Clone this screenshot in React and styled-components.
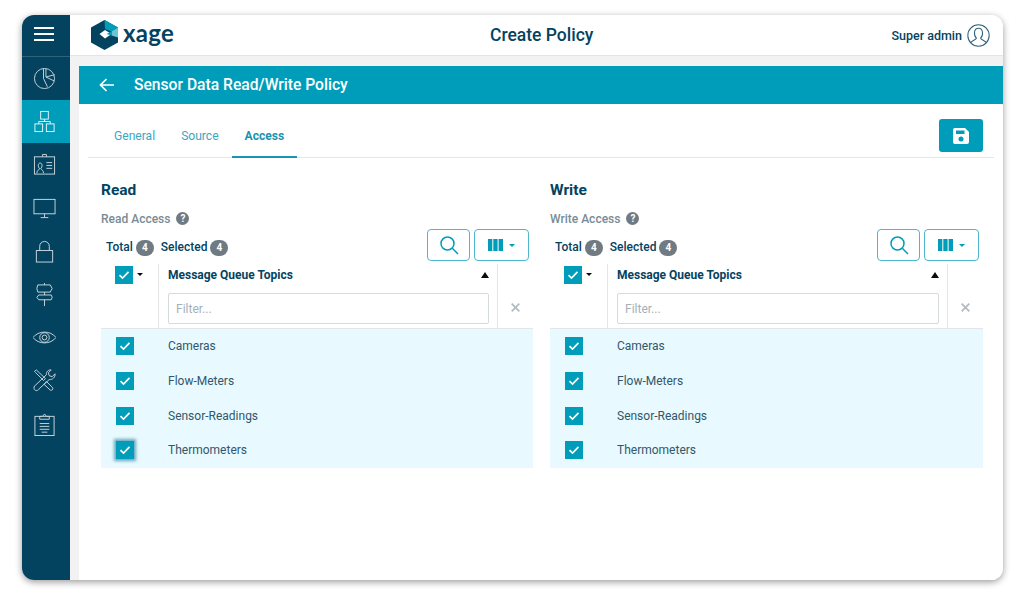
import * as React from "react";
import styled, { createGlobalStyle } from "styled-components";

const topics = ["Cameras", "Flow-Meters", "Sensor-Readings", "Thermometers"];

const NavIcons = [
  () => (
    <g>
      <circle cx="12" cy="12" r="10.500" />
      <path d="M11 1.600V12l4 8.600M13.500 2v8.500l9-2.500M13.500 10.500l8.500 4" />
    </g>
  ),
  () => (
    <g>
      <rect x="8" y="1.500" width="8" height="8" />
      <rect x="2" y="14.500" width="8" height="8" />
      <rect x="14" y="14.500" width="8" height="8" />
      <path d="M12 9.500v2.500M6 14.500V12h12v2.500" />
    </g>
  ),
  () => (
    <g>
      <rect x="1.500" y="4" width="21" height="18" />
      <path d="M10 4V1.500h4V4M14 10h6M14 13h6M14 16h6M4 21c.2-3 2-3.500 3-4.500-2-2-2-6 .5-6s2.500 4 .5 6c1 1 2.800 1.500 3 4.500" />
    </g>
  ),
  () => (
    <g>
      <rect x="1" y="2.500" width="22" height="15" />
      <path d="M12 17.500v3.500M8 21.500h8" />
    </g>
  ),
  () => (
    <g>
      <rect x="3.500" y="11" width="17" height="12" />
      <path d="M7 11V6.500a5 5 0 0 1 10 0V11" />
    </g>
  ),
  () => (
    <g>
      <path d="M12 0v2M12 9.500v3M12 17.500v6.500" />
      <path d="M5 2h13l2 3.700-2 3.800H5l-1-3.800zM19 12.500H6l-2 2.500 2 2.500h13l1-2.500z" />
    </g>
  ),
  () => (
    <g>
      <path d="M0 12c5.500-7.500 18.500-7.500 24 0-5.500 7.500-18.500 7.500-24 0z" />
      <circle cx="12" cy="12" r="5" />
      <circle cx="12" cy="12" r="2.500" />
    </g>
  ),
  () => (
    <g>
      <path d="M1.500 2.500 3.500 1 13 10l-2 2-8.500-8.500z" />
      <path d="M14 13l6.500 6.500c1 1.500-1 3.500-2.500 2.500L11.500 16z" />
      <path d="M23 5l-3 3-3-1-1-3 3-3c-3-.5-5.500 2-5 5L3 16.500c-2 1-2.500 3.500-1.500 5s4 1.500 5-1L17 11c3 .5 6.500-2.500 6-6z" />
    </g>
  ),
  () => (
    <g>
      <rect x="2" y="3.500" width="20" height="20" />
      <path d="M7 6.500V3.500h3L12 1l2 2.500h3v3zM7 11h10M7 14h10M7 17h10M9 20h6" />
    </g>
  ),
];

function HelpBadge() {
  return <HelpDot>?</HelpDot>;
}

function CheckBox({ focused }) {
  return (
    <CheckSquare $focused={focused}>
      <svg width="12" height="10" viewBox="0 0 12 10" fill="none">
        <path d="M1.500 5.200 4.500 8 10.500 1.800" stroke="#fff" strokeWidth="1.700" />
      </svg>
    </CheckSquare>
  );
}

function AccessPanel({ title, focusLast }) {
  return (
    <Panel>
      <PanelTitle>{title}</PanelTitle>
      <AccessLabel>
        {title} Access <HelpBadge />
      </AccessLabel>
      <CountBar>
        <Counts>
          Total <CountBadge>4</CountBadge>
          <CountGap>Selected</CountGap> <CountBadge>4</CountBadge>
        </Counts>
        <ToolButton $width={43}>
          <svg width="20" height="20" viewBox="0 0 20 20" fill="none" stroke="#009dbb" strokeWidth="1.500">
            <circle cx="8.500" cy="8.500" r="6.500" />
            <path d="M13.300 13.300 19 19" />
          </svg>
        </ToolButton>
        <ToolButton $width={55}>
          <svg width="15" height="12" viewBox="0 0 15 12" fill="#009dbb">
            <rect x="0" y="0" width="4.300" height="12" />
            <rect x="5.300" y="0" width="4.300" height="12" />
            <rect x="10.600" y="0" width="4.400" height="12" />
          </svg>
          <Caret $color="#009dbb" />
        </ToolButton>
      </CountBar>
      <TableHead>
        <CheckHead>
          <CheckBox />
          <Caret $color="#0b0b0b" />
        </CheckHead>
        <TopicHead>
          <TopicTitle>
            Message Queue Topics
            <SortArrow />
          </TopicTitle>
          <FilterInput placeholder="Filter..." readOnly />
        </TopicHead>
        <ClearHead>
          <svg width="9" height="9" viewBox="0 0 9 9" stroke="#b4bcc2" strokeWidth="1.800">
            <path d="M.7.700l7.600 7.600M8.300.7.700 8.300" />
          </svg>
        </ClearHead>
      </TableHead>
      <Rows>
        {topics.map((topic, index) => (
          <Row key={topic}>
            <RowCheck>
              <CheckBox focused={focusLast && index === topics.length - 1} />
            </RowCheck>
            <RowText>{topic}</RowText>
          </Row>
        ))}
      </Rows>
    </Panel>
  );
}

export default function App() {
  return (
    <Page>
      <GlobalStyle />
      <Frame>
        <Sidebar>
          <MenuCell>
            <svg width="20" height="14" viewBox="0 0 20 14" fill="#fff">
              <rect y="0" width="20" height="2" />
              <rect y="6" width="20" height="2" />
              <rect y="12" width="20" height="2" />
            </svg>
          </MenuCell>
          {NavIcons.map((Icon, index) => (
            <NavCell key={index} $active={index === 1}>
              <svg width="23" height="23" viewBox="0 0 24 24" fill="none" stroke={index === 1 ? "#e4f5f9" : "#c7d6de"} strokeWidth="1">
                <Icon />
              </svg>
            </NavCell>
          ))}
        </Sidebar>
        <Main>
          <TopBar>
            <Logo>
              <svg width="27" height="30" viewBox="0 0 27 30">
                <path d="M13.500 0 27 7.500V22.500L13.500 30 0 22.500V7.500z" fill="#04435f" />
                <path d="M13.500 0 27 7.500 20.500 11.500 14 9z" fill="#009dbb" />
                <path d="M20.500 11.500 27 7.500V17.500L20.500 15.500z" fill="#6cc4d6" />
                <path d="M14 10 20.500 14 14 18.500 8.500 14z" fill="#fff" />
                <path d="M20.500 11.500V15.500L15.500 14z" fill="#009dbb" />
              </svg>
              <LogoText>xage</LogoText>
            </Logo>
            <PageTitle>Create Policy</PageTitle>
            <User>
              Super admin
              <svg width="23" height="23" viewBox="0 0 22 22" fill="none" stroke="#2f6179" strokeWidth="1">
                <circle cx="11" cy="11" r="10.200" />
                <path d="M3.500 18c1-2.500 5-2.500 5.500-4.500-3-3-2.500-9.500 2-9.500s5 6.500 2 9.500c.5 2 4.500 2 5.500 4.500" />
              </svg>
            </User>
          </TopBar>
          <Content>
            <Banner>
              <svg width="16" height="14" viewBox="0 0 16 14" fill="none" stroke="#fff" strokeWidth="1.700">
                <path d="M15 7H1.500M7.500 1 1.500 7l6 6" />
              </svg>
              <BannerTitle>Sensor Data Read/Write Policy</BannerTitle>
            </Banner>
            <Card>
              <TabBar>
                <Tab>General</Tab>
                <Tab>Source</Tab>
                <Tab $active>Access</Tab>
                <SaveButton>
                  <svg width="16" height="16" viewBox="0 0 16 16">
                    <path fillRule="evenodd" fill="#fff" d="M2 0h10l4 4v10a2 2 0 0 1-2 2H2a2 2 0 0 1-2-2V2a2 2 0 0 1 2-2zM3 2.500V6h8.500V2.500zM8 8.500a2.500 2.500 0 1 0 0 5 2.500 2.500 0 0 0 0-5z" />
                  </svg>
                </SaveButton>
              </TabBar>
              <Panels>
                <AccessPanel title="Read" focusLast />
                <AccessPanel title="Write" />
              </Panels>
            </Card>
          </Content>
        </Main>
      </Frame>
    </Page>
  );
}

const GlobalStyle = createGlobalStyle`
  html, body {
    margin: 0;
    background: #fff;
    font-family: Roboto, "Liberation Sans", sans-serif;
  }
`;

const Page = styled.div`
  width: 1024px;
  height: 595px;
  padding: 15px 21px 15px 22px;
  box-sizing: border-box;
  overflow: hidden;
`;

const Frame = styled.div`
  height: 565px;
  display: flex;
  border-radius: 12px;
  overflow: hidden;
  background: #fff;
  box-shadow: 0 2px 7px rgba(0, 0, 0, 0.4);
`;

const Sidebar = styled.nav`
  width: 48px;
  flex: none;
  display: flex;
  flex-direction: column;
  background: #04435f;
`;

const MenuCell = styled.div`
  height: 42px;
  display: flex;
  align-items: center;
  justify-content: center;
  border-bottom: 1px solid #2f6179;
  padding: 0 4px 4px 0;
  box-sizing: border-box;
`;

const NavCell = styled.div`
  height: 43.200px;
  display: flex;
  align-items: center;
  justify-content: center;
  padding-right: 4px;
  background: ${(props) => (props.$active ? "#009dbb" : "transparent")};
`;

const Main = styled.div`
  flex: 1;
  min-width: 0;
  display: flex;
  flex-direction: column;
  background: #f2f2f2;
`;

const TopBar = styled.header`
  height: 41px;
  flex: none;
  display: flex;
  align-items: center;
  justify-content: space-between;
  position: relative;
  padding: 0 2px 0 21px;
  box-sizing: border-box;
  background: #fff;
  border-bottom: 1px solid #e3e6e8;
`;

const Logo = styled.div`
  display: flex;
  align-items: center;
  gap: 5px;
`;

const LogoText = styled.span`
  font-size: 24px;
  line-height: 24px;
  font-weight: 700;
  letter-spacing: 0.3px;
  color: #04435f;
  font-family: Lato, Roboto, sans-serif;
  margin-top: -5px;
`;

const PageTitle = styled.h1`
  position: absolute;
  left: 420px;
  top: 10px;
  margin: 0;
  font-size: 17.500px;
  line-height: 20px;
  font-weight: 500;
  color: #04435f;
`;

const User = styled.div`
  display: flex;
  align-items: center;
  gap: 5px;
  margin-right: 11px;
  font-size: 12.500px;
  font-weight: 500;
  color: #04435f;
`;

const Content = styled.div`
  flex: 1;
  display: flex;
  flex-direction: column;
  margin: 10px 0 0 9px;
  min-height: 0;
`;

const Banner = styled.div`
  height: 38px;
  flex: none;
  display: flex;
  align-items: center;
  gap: 19px;
  padding-left: 20px;
  background: #009dbb;
`;

const BannerTitle = styled.h2`
  margin: 0 0 1px;
  font-size: 15.650px;
  font-weight: 500;
  color: #fff;
`;

const Card = styled.section`
  flex: 1;
  background: #fff;
  padding: 0 9px;
`;

const TabBar = styled.div`
  height: 54px;
  display: flex;
  align-items: flex-end;
  box-sizing: border-box;
  border-bottom: 1px solid #e3e6e8;
  padding-left: 13px;
  position: relative;
`;

const Tab = styled.div`
  height: 40px;
  box-sizing: border-box;
  padding: 0 13px;
  line-height: 37px;
  font-size: 12.100px;
  font-weight: ${(props) => (props.$active ? 700 : 400)};
  color: ${(props) => (props.$active ? "#1c93b0" : "#3aa7c1")};
  border-bottom: 2px solid ${(props) => (props.$active ? "#1c93b0" : "transparent")};
  margin-bottom: -1px;
`;

const SaveButton = styled.button`
  position: absolute;
  right: 11px;
  top: 15px;
  width: 44px;
  height: 33px;
  padding: 0;
  border: none;
  border-radius: 3px;
  display: flex;
  align-items: center;
  justify-content: center;
  background: #009dbb;
`;

const Panels = styled.div`
  display: grid;
  grid-template-columns: 432px 433px;
  column-gap: 17px;
  padding: 0 10px 0 13px;
`;

const Panel = styled.div`
  display: flex;
  flex-direction: column;
`;

const PanelTitle = styled.h3`
  margin: 22px 0 0;
  font-size: 15.500px;
  line-height: 20px;
  font-weight: 700;
  color: #04435f;
`;

const AccessLabel = styled.div`
  display: flex;
  align-items: center;
  gap: 6px;
  margin-top: 10px;
  height: 17px;
  font-size: 12px;
  font-weight: 500;
  color: #7a8b95;
`;

const HelpDot = styled.span`
  width: 13px;
  height: 13px;
  border-radius: 50%;
  display: inline-flex;
  align-items: center;
  justify-content: center;
  background: #6f7a82;
  color: #fff;
  font-size: 10px;
  font-weight: 700;
`;

const CountBar = styled.div`
  display: flex;
  align-items: center;
  gap: 4px;
  height: 32px;
  margin-top: 2px;
  padding: 0 4px 0 5px;
`;

const Counts = styled.div`
  flex: 1;
  font-size: 12px;
  font-weight: 500;
  color: #04435f;
  padding-top: 6px;
`;

const CountGap = styled.span`
  margin-left: 7px;
`;

const CountBadge = styled.span`
  display: inline-block;
  width: 18px;
  height: 16px;
  margin-left: 0;
  border-radius: 8px;
  text-align: center;
  line-height: 16px;
  background: #6f7a82;
  color: #fff;
  font-size: 10px;
  font-weight: 700;
`;

const ToolButton = styled.button`
  width: ${(props) => props.$width}px;
  height: 32px;
  padding: 0;
  display: flex;
  align-items: center;
  justify-content: center;
  gap: 6px;
  background: #fff;
  border: 1px solid #4fb6cd;
  border-radius: 4px;
`;

const Caret = styled.span`
  width: 0;
  height: 0;
  border-left: 3.500px solid transparent;
  border-right: 3.500px solid transparent;
  border-top: 3.500px solid ${(props) => props.$color};
`;

const TableHead = styled.div`
  display: flex;
  height: 64px;
  margin-top: 3px;
  border-bottom: 1px solid #e3e6e8;
  box-sizing: content-box;
`;

const CheckHead = styled.div`
  width: 58px;
  flex: none;
  box-sizing: border-box;
  padding: 2px 0 0 14px;
  display: flex;
  align-items: flex-start;
  gap: 4px;
  border-right: 1px solid #e3e6e8;

  & > span:last-child {
    margin-top: 7px;
  }
`;

const TopicHead = styled.div`
  flex: 1;
  box-sizing: border-box;
  padding: 2px 8px 0 9px;
  border-right: 1px solid #e3e6e8;
`;

const TopicTitle = styled.div`
  height: 18px;
  display: flex;
  align-items: center;
  justify-content: space-between;
  font-size: 12px;
  font-weight: 700;
  color: #04435f;
`;

const SortArrow = styled.span`
  width: 0;
  height: 0;
  border-left: 4.500px solid transparent;
  border-right: 4.500px solid transparent;
  border-bottom: 6px solid #0b0b0b;
`;

const FilterInput = styled.input`
  display: block;
  width: 100%;
  height: 31px;
  margin-top: 9px;
  padding: 0 7px;
  box-sizing: border-box;
  border: 1px solid #d5dadd;
  border-radius: 2px;
  font-family: inherit;
  font-size: 12px;
  outline: none;

  &::placeholder {
    color: #a4b0b8;
  }
`;

const ClearHead = styled.div`
  width: 35px;
  flex: none;
  display: flex;
  align-items: center;
  justify-content: center;
  padding-top: 22px;
  box-sizing: border-box;
`;

const Rows = styled.div`
  background: #e8faff;
`;

const Row = styled.div`
  height: 34.700px;
  display: flex;
  align-items: center;
`;

const RowCheck = styled.div`
  width: 67px;
  flex: none;
  padding-left: 15px;
  box-sizing: border-box;
  display: flex;
`;

const RowText = styled.span`
  font-size: 12px;
  color: #33566b;
`;

const CheckSquare = styled.span`
  width: 18px;
  height: 18px;
  flex: none;
  display: inline-flex;
  align-items: center;
  justify-content: center;
  background: #009dbb;
  box-shadow: ${(props) => (props.$focused ? "0 0 3px 2px rgba(0, 100, 135, 0.55)" : "none")};
`;
